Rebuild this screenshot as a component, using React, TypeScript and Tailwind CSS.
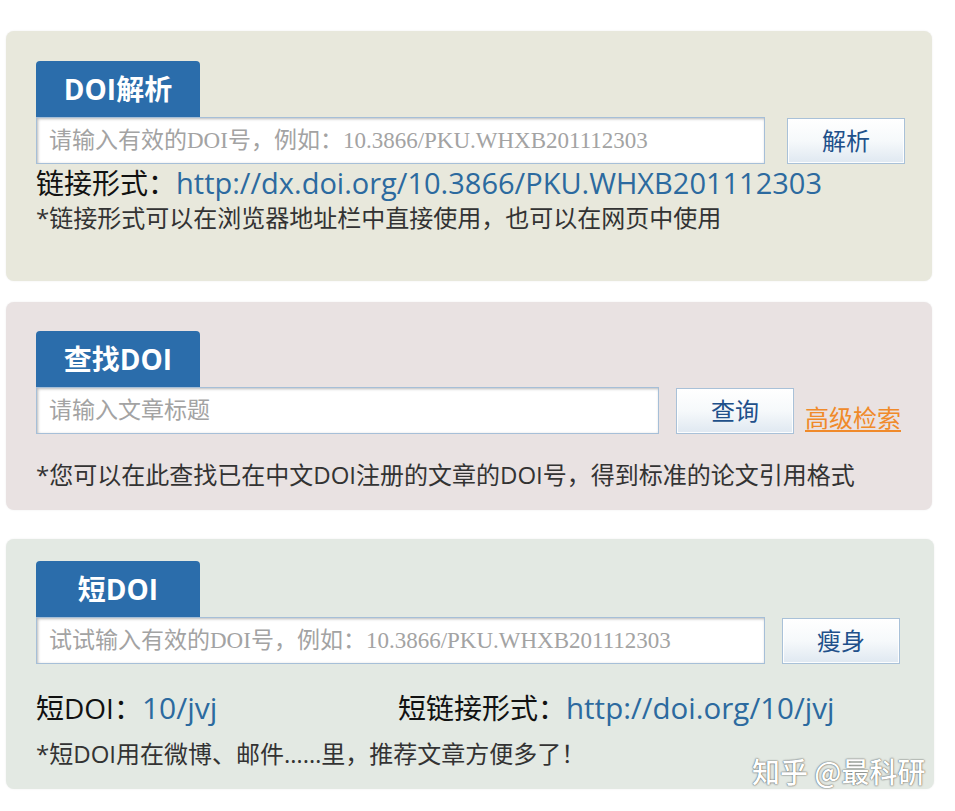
import React from "react";

const FONT = "font-['Open_Sans','Noto_Sans_CJK_SC',sans-serif]";

function Tab({ children }: { children: React.ReactNode }) {
  return (
    <div className="flex h-[56px] w-[164px] items-center justify-center rounded-t-[4px] bg-[#2b6dab] text-[28px] font-bold leading-none text-white">
      {children}
    </div>
  );
}

function FakeInput({ width, parts }: { width: string; parts: string }) {
  return (
    <div
      className={`flex h-[47px] ${width} items-center border border-[#a6bfd8] bg-white pl-[12px] shadow-[inset_1px_1px_3px_rgba(0,0,0,0.28)]`}
    >
      <span className="whitespace-nowrap font-['Liberation_Serif','Noto_Sans_CJK_SC',serif] text-[23px] leading-none text-[#a3a3a3]">
        {parts}
      </span>
    </div>
  );
}

function Btn({ label, ml }: { label: string; ml: string }) {
  return (
    <button
      className={`${ml} flex h-[46px] w-[118px] items-center justify-center border border-[#a9c1d8] bg-gradient-to-b from-white via-[#f6f9fb] to-[#dfe8f1] text-[24px] leading-none text-[#21508a] shadow-[inset_0_0_0_1px_rgba(255,255,255,0.9)]`}
    >
      {label}
    </button>
  );
}

export default function App() {
  return (
    <div className={`min-h-[811px] w-[955px] bg-white ${FONT}`}>
      <div className="h-[31px]" />
      {/* Panel 1 */}
      <section className="ml-[6px] flex h-[250px] w-[926px] flex-col rounded-[8px] bg-[#e8e8dc] pl-[30px] pt-[30px] shadow-[0_0_2px_rgba(0,0,0,0.08)]">
        <Tab>DOI解析</Tab>
        <div className="flex items-center">
          <FakeInput width="w-[729px]" parts="请输入有效的DOI号，例如：10.3866/PKU.WHXB201112303" />
          <Btn label="解析" ml="ml-[22px]" />
        </div>
        <div className="whitespace-nowrap text-[28px] leading-[38px] text-[#111]">
          链接形式：<span className="text-[29px] text-[#2c6a9f]">http://dx.doi.org/10.3866/PKU.WHXB201112303</span>
        </div>
        <div className="whitespace-nowrap text-[24px] leading-[32px] text-[#333]">
          *链接形式可以在浏览器地址栏中直接使用，也可以在网页中使用
        </div>
      </section>

      <div className="h-[21px]" />
      {/* Panel 2 */}
      <section className="ml-[6px] flex h-[208px] w-[926px] flex-col rounded-[8px] bg-[#e9e2e2] pl-[30px] pt-[29px] shadow-[0_0_2px_rgba(0,0,0,0.08)]">
        <Tab>查找DOI</Tab>
        <div className="flex items-center">
          <FakeInput width="w-[623px]" parts="请输入文章标题" />
          <Btn label="查询" ml="ml-[17px]" />
          <a className="ml-[11px] mt-[14px] whitespace-nowrap text-[24px] leading-none text-[#f08a2a] underline underline-offset-[3px]">
            高级检索
          </a>
        </div>
        <div className="mt-[25px] whitespace-nowrap text-[24px] leading-[32px] text-[#333]">
          *您可以在此查找已在中文DOI注册的文章的DOI号，得到标准的论文引用格式
        </div>
      </section>

      <div className="h-[29px]" />
      {/* Panel 3 */}
      <section className="relative ml-[6px] flex h-[250px] w-[928px] flex-col rounded-[8px] bg-[#e3e9e3] pl-[30px] pt-[22px] shadow-[0_0_2px_rgba(0,0,0,0.08)]">
        <Tab>短DOI</Tab>
        <div className="flex items-center">
          <FakeInput width="w-[729px]" parts="试试输入有效的DOI号，例如：10.3866/PKU.WHXB201112303" />
          <Btn label="瘦身" ml="ml-[17px]" />
        </div>
        <div className="mt-[24px] flex whitespace-nowrap text-[28px] leading-[40px] text-[#111]">
          <div className="w-[362px]">
            短DOI：<span className="text-[30px] text-[#2c6a9f]">10/jvj</span>
          </div>
          <div>
            短链接形式：<span className="text-[29.5px] text-[#2c6a9f]">http://doi.org/10/jvj</span>
          </div>
        </div>
        <div className="mt-[10px] whitespace-nowrap text-[24px] leading-[32px] text-[#333]">
          *短DOI用在微博、邮件……里，推荐文章方便多了！
        </div>
        <div className="absolute left-[746px] top-[212px] whitespace-nowrap font-['Noto_Sans_CJK_SC',sans-serif] text-[28px] font-medium leading-[40px] text-white [text-shadow:0_0_2px_rgba(0,0,0,0.55),0_0_1px_rgba(0,0,0,0.5)]">
          知乎 @最科研
        </div>
      </section>
    </div>
  );
}
